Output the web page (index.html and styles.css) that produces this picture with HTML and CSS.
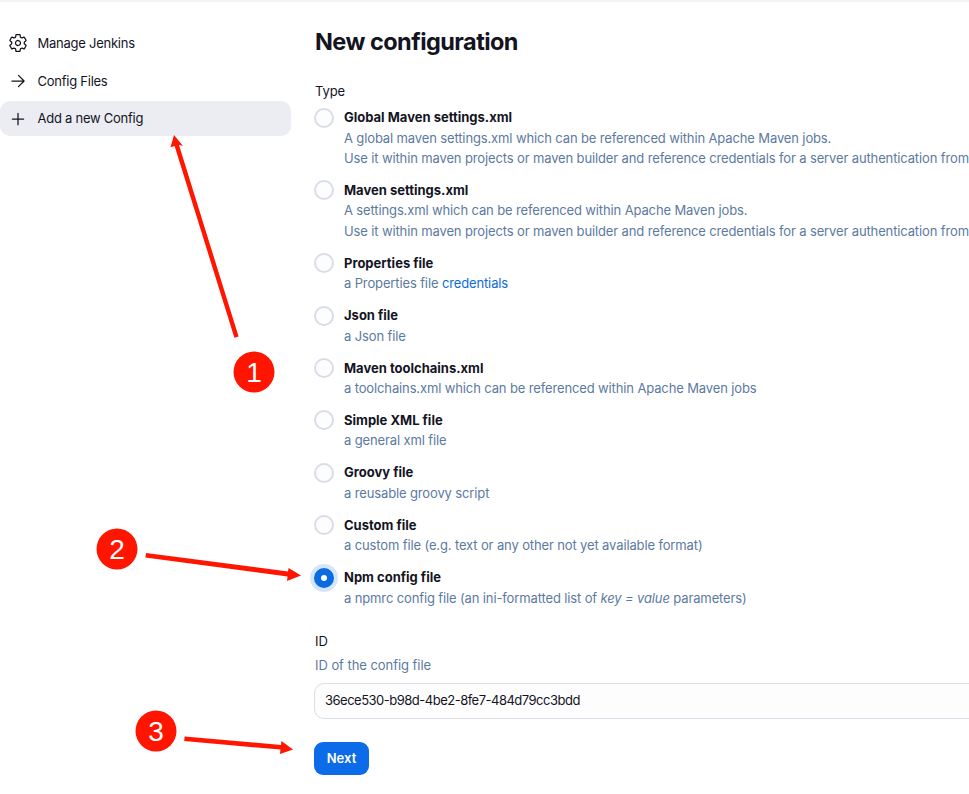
FILE: index.html
```html
<!DOCTYPE html>
<html lang="en">
<head>
<meta charset="utf-8">
<title>New configuration</title>
<link rel="stylesheet" href="styles.css">
</head>
<body>
<div class="topstrip"></div>
<div class="layout">
  <nav class="sidebar">
    <a class="navitem"><svg class="navicon" viewBox="0 0 512 512" fill="none" stroke="currentColor" stroke-width="32" stroke-linecap="round" stroke-linejoin="round"><path d="M262.29 192.31a64 64 0 1057.4 57.4 64.13 64.13 0 00-57.4-57.4zM416.39 256a154.34 154.34 0 01-1.53 20.79l45.21 35.46a10.81 10.81 0 012.45 13.75l-42.77 74a10.81 10.81 0 01-13.14 4.59l-44.9-18.08a16.11 16.11 0 00-15.17 1.75A164.48 164.48 0 01325 400.8a15.94 15.94 0 00-8.82 12.14l-6.73 47.89a11.08 11.08 0 01-10.68 9.17h-85.54a11.11 11.11 0 01-10.69-8.87l-6.72-47.82a16.07 16.07 0 00-9-12.22 155.3 155.3 0 01-21.46-12.57 16 16 0 00-15.11-1.71l-44.89 18.07a10.81 10.81 0 01-13.14-4.58l-42.77-74a10.8 10.8 0 012.45-13.75l38.21-30a16.05 16.05 0 006-14.08c-.36-4.17-.58-8.33-.58-12.5s.21-8.27.58-12.35a16 16 0 00-6.07-13.94l-38.19-30A10.81 10.81 0 0149.48 186l42.77-74a10.81 10.81 0 0113.14-4.59l44.9 18.08a16.11 16.11 0 0015.17-1.75A164.48 164.48 0 01187 111.2a15.94 15.94 0 008.82-12.14l6.73-47.89A11.08 11.08 0 01213.23 42h85.54a11.11 11.11 0 0110.69 8.87l6.72 47.82a16.07 16.07 0 009 12.22 155.3 155.3 0 0121.46 12.57 16 16 0 0015.11 1.71l44.89-18.07a10.81 10.81 0 0113.14 4.58l42.77 74a10.8 10.8 0 01-2.45 13.75l-38.21 30a16.05 16.05 0 00-6.05 14.08c.33 4.14.55 8.3.55 12.47z"/></svg><span>Manage Jenkins</span></a>
    <a class="navitem"><svg class="navicon" viewBox="0 0 512 512" fill="none" stroke="currentColor" stroke-width="32" stroke-linecap="round" stroke-linejoin="round"><path d="M268 112l144 144-144 144M392 256H100"/></svg><span>Config Files</span></a>
    <a class="navitem active"><svg class="navicon" viewBox="0 0 512 512" fill="none" stroke="currentColor" stroke-width="32" stroke-linecap="round" stroke-linejoin="round"><path d="M256 112v288M400 256H112"/></svg><span>Add a new Config</span></a>
  </nav>
  <main class="main">
    <h1 class="title">New configuration</h1>
    <div class="label">Type</div>
    <div class="options">
      <label class="option"><span class="radio"></span><span class="body"><b>Global Maven settings.xml</b><span class="desc">A global maven settings.xml which can be referenced within Apache Maven jobs.</span><span class="desc">Use it within maven projects or maven builder and reference credentials for a server authentication from</span></span></label>
      <label class="option"><span class="radio"></span><span class="body"><b>Maven settings.xml</b><span class="desc">A settings.xml which can be referenced within Apache Maven jobs.</span><span class="desc">Use it within maven projects or maven builder and reference credentials for a server authentication from</span></span></label>
      <label class="option"><span class="radio"></span><span class="body"><b>Properties file</b><span class="desc">a Properties file <a class="link">credentials</a></span></span></label>
      <label class="option"><span class="radio"></span><span class="body"><b>Json file</b><span class="desc">a Json file</span></span></label>
      <label class="option"><span class="radio"></span><span class="body"><b>Maven toolchains.xml</b><span class="desc">a toolchains.xml which can be referenced within Apache Maven jobs</span></span></label>
      <label class="option"><span class="radio"></span><span class="body"><b>Simple XML file</b><span class="desc">a general xml file</span></span></label>
      <label class="option"><span class="radio"></span><span class="body"><b>Groovy file</b><span class="desc">a reusable groovy script</span></span></label>
      <label class="option"><span class="radio"></span><span class="body"><b>Custom file</b><span class="desc">a custom file (e.g. text or any other not yet available format)</span></span></label>
      <label class="option"><span class="radio checked"></span><span class="body"><b>Npm config file</b><span class="desc">a npmrc config file (an ini-formatted list of <i>key = value</i> parameters)</span></span></label>
    </div>
    <div class="label idlabel">ID</div>
    <div class="hint">ID of the config file</div>
    <div class="input">36ece530-b98d-4be2-8fe7-484d79cc3bdd</div>
    <button class="next">Next</button>
  </main>
</div>
<svg class="annotations" viewBox="0 0 969 794" width="969" height="794">
  <g fill="#ff1500">
    <path d="M234.4 337.8 L174.6 146 L170.5 147.3 L174 135 L183 146 L178.9 144.8 L238.6 336.6 Z"/>
    <path d="M146 553 L288 571.5 L288.6 568 L301 575.5 L287 581 L287.5 576.5 L145.4 557.5 Z"/>
    <path d="M184.6 736.5 L281 745 L281.4 741 L293 749.5 L280 754 L280.4 749.6 L184.2 741 Z"/>
    <circle cx="254" cy="372" r="20.5"/>
    <circle cx="117" cy="549" r="20.5"/>
    <circle cx="156" cy="731" r="20.5"/>
  </g>
  <g class="num">
    <text x="254" y="382">1</text>
    <text x="117" y="559">2</text>
    <text x="156" y="741">3</text>
  </g>
</svg>
</body>
</html>
```
FILE: styles.css
```css
* { box-sizing: border-box; }
html, body { margin: 0; height: 794px; overflow: hidden; }
body {
  position: relative;
  width: 969px;
  background: #fff;
  color: #14141f;
  font-family: Inter, "Liberation Sans", sans-serif;
  font-size: 14px;
  line-height: 21px;
}
.topstrip { height: 2px; background: #f4f4f6; }
.layout { display: flex; }
.sidebar {
  width: 291px;
  flex: none;
  padding-top: 23px;
  display: flex;
  flex-direction: column;
  gap: 2px;
}
.navitem {
  display: flex;
  align-items: center;
  gap: 10px;
  height: 36px;
  padding-left: 7.5px;
  border-radius: 10px;
  color: #14141f;
  font-size: 13px;
  font-weight: 400;
  letter-spacing: -0.25px;
}
.navitem.active { background: #ecedf2; height: 35px; }
.navicon { width: 20px; height: 20px; flex: none; }
.main { padding: 0 0 0 24px; flex: none; width: 900px; white-space: nowrap; }
.title {
  margin: 22px 0 0;
  font-size: 23.5px;
  line-height: 36px;
  font-weight: 700;
  letter-spacing: -0.55px;
  color: #14141f;
}
.label { margin-top: 21px; font-size: 13px; line-height: 21px; font-weight: 400; letter-spacing: -0.1px; }
.options { margin-top: 5px; display: flex; flex-direction: column; }
.option { display: flex; margin-bottom: 11.4px; margin-left: -1px; }
.radio {
  width: 20px;
  height: 20px;
  flex: none;
  border-radius: 50%;
  border: 2px solid #d9dde8;
  background: #fdfdfe;
  margin: 0.5px 10px 0 0;
}
.radio.checked {
  border: 7px solid #0b6be0;
  background: #fff;
  box-shadow: 0 0 0 4px #d5e6fb;
}
.body { display: flex; flex-direction: column; font-size: 13px; }
.body b { font-weight: 700; color: #14141f; line-height: 20.5px; }
.desc { color: #5c7a9f; line-height: 20.5px; letter-spacing: -0.13px; }
.link { color: #0b6be0; }
.idlabel { margin-top: 11px; }
.hint { color: #5c7a9f; font-size: 13px; line-height: 20px; margin-top: 3px; letter-spacing: -0.05px; }
.input {
  margin: 8px 0 0 -1px;
  height: 36px;
  width: 700px;
  border: 1px solid #d9dde8;
  border-radius: 10px;
  background: #fdfdfe;
  padding-left: 10px;
  display: flex;
  align-items: center;
  font-size: 13px;
  letter-spacing: -0.5px;
}
.next {
  display: block;
  margin: 23px 0 0 -1px;
  width: 55px;
  height: 33px;
  border: 0;
  border-radius: 9px;
  background: #0b6be8;
  color: #fff;
  font: 600 13px Inter, "Liberation Sans", sans-serif;
}
.annotations { position: absolute; left: 0; top: 0; pointer-events: none; }
.num { fill: #fff; font-family: "Liberation Sans", sans-serif; font-size: 28px; text-anchor: middle; }
```
